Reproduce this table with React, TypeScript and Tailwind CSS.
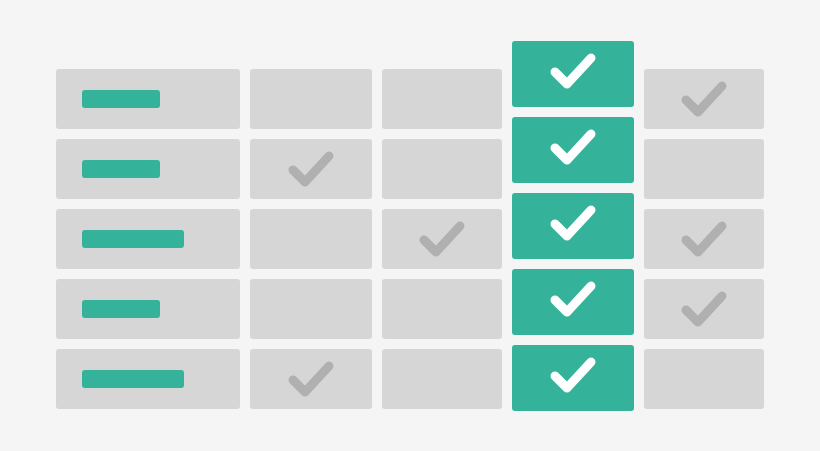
import React from "react";

type Row = { bar: "short" | "long"; checks: [boolean, boolean, boolean] };

const rows: Row[] = [
  { bar: "short", checks: [false, false, true] },
  { bar: "short", checks: [true, false, false] },
  { bar: "long", checks: [false, true, true] },
  { bar: "short", checks: [false, false, true] },
  { bar: "long", checks: [true, false, false] },
];

function Check({ white }: { white?: boolean }) {
  return (
    <svg width="48" height="40" viewBox="0 0 48 40" fill="none">
      <polyline
        points="6,21 18,33 42,7"
        stroke={white ? "#ffffff" : "#b0b0b0"}
        strokeWidth="9"
        strokeLinecap="round"
        strokeLinejoin="round"
      />
    </svg>
  );
}

function GrayCell({ w, checked }: { w: string; checked: boolean }) {
  return (
    <div className={`${w} flex h-[60px] items-center justify-center rounded-[3px] bg-[#d6d6d6]`}>
      {checked && <Check />}
    </div>
  );
}

export default function App() {
  return (
    <div className="h-[451px] w-[820px] overflow-hidden bg-[#f5f5f5]">
      <div className="ml-[56px] flex gap-[10px]">
        {/* label column */}
        <div className="flex w-[184px] flex-col gap-[10px] pt-[69px]">
          {rows.map((r, i) => (
            <div key={i} className="flex h-[60px] items-center rounded-[3px] bg-[#d6d6d6] pl-[26px]">
              <div
                className={`h-[18px] rounded-[3px] bg-[#34b29a] ${r.bar === "long" ? "w-[102px]" : "w-[78px]"}`}
              />
            </div>
          ))}
        </div>

        <div className="flex w-[122px] flex-col gap-[10px] pt-[69px]">
          {rows.map((r, i) => (
            <GrayCell key={i} w="w-[122px]" checked={r.checks[0]} />
          ))}
        </div>

        <div className="flex w-[120px] flex-col gap-[10px] pt-[69px]">
          {rows.map((r, i) => (
            <GrayCell key={i} w="w-[120px]" checked={r.checks[1]} />
          ))}
        </div>

        {/* highlighted column */}
        <div className="flex w-[122px] flex-col gap-[10px] pt-[41px]">
          {rows.map((_, i) => (
            <div key={i} className="flex h-[66px] items-center justify-center rounded-[3px] bg-[#34b29a] pb-[6px]">
              <Check white />
            </div>
          ))}
        </div>

        <div className="flex w-[120px] flex-col gap-[10px] pt-[69px]">
          {rows.map((r, i) => (
            <GrayCell key={i} w="w-[120px]" checked={r.checks[2]} />
          ))}
        </div>
      </div>
    </div>
  );
}
